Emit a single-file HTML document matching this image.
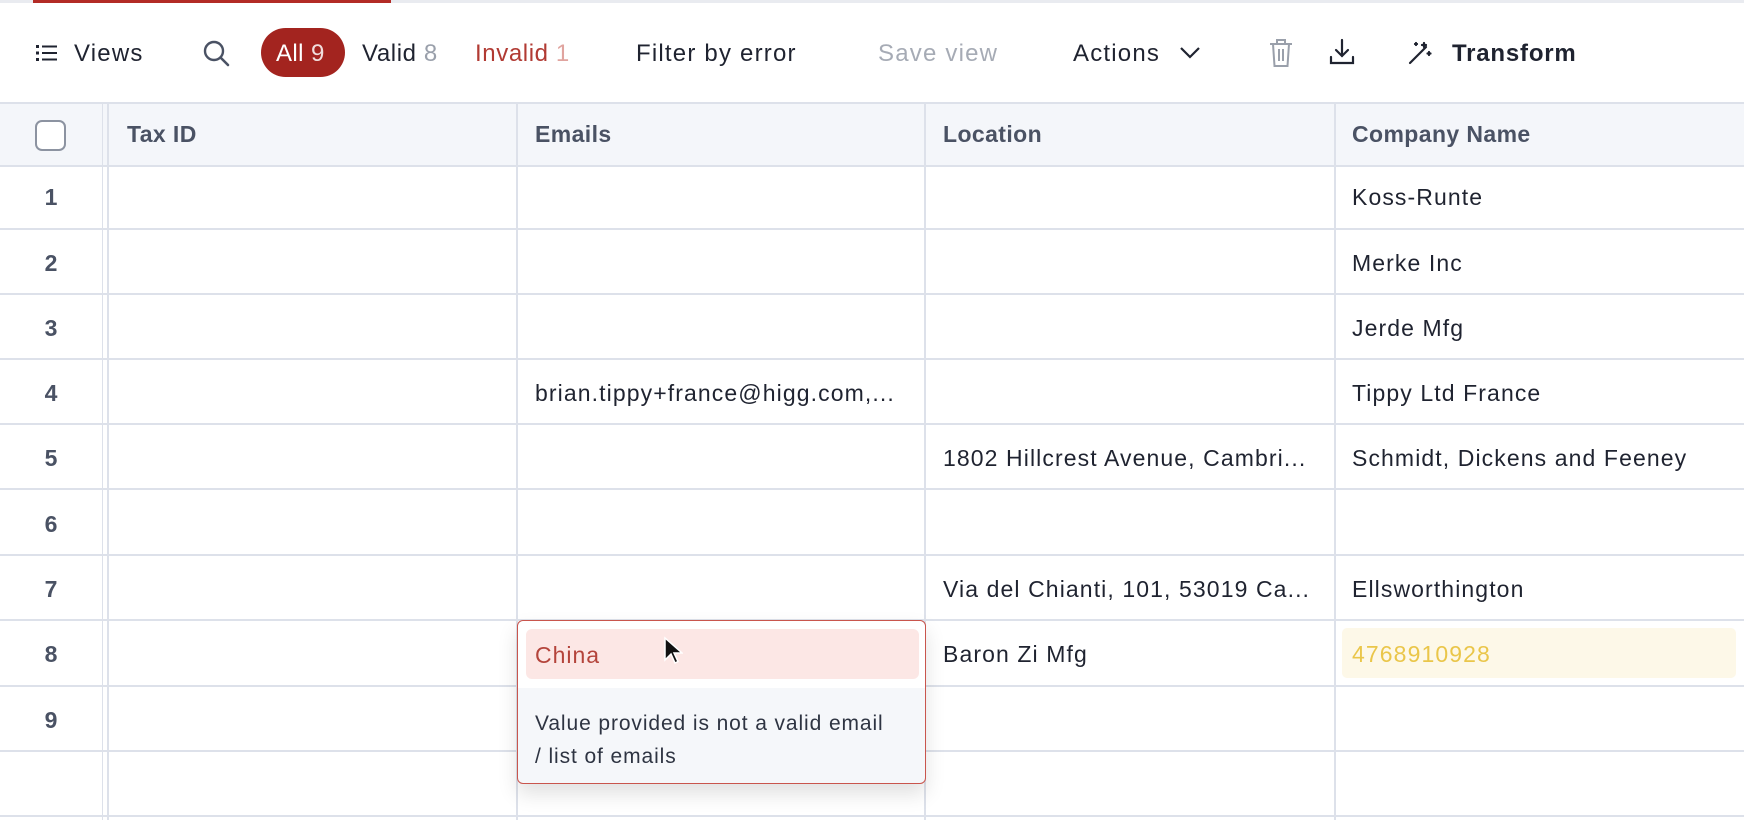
<!DOCTYPE html>
<html><head><meta charset="utf-8"><style>
*{box-sizing:border-box;margin:0;padding:0}
body{width:1744px;height:820px;overflow:hidden;background:#fff;font-family:"Liberation Sans",sans-serif;color:#1f2330;position:relative}
.a{position:absolute;white-space:nowrap}
.tb{font-size:24px;top:40px;letter-spacing:1.2px}
.h{position:absolute;top:102px;height:65px;left:0;width:1744px;background:#f4f6fa;border-top:2px solid #dde1ea;border-bottom:2px solid #dde1ea}
.vl{position:absolute;top:102px;bottom:0;width:2px;background:#dde1ea}
.hl{position:absolute;left:0;width:1744px;height:2px;background:#dde1ea}
.ht{font-size:23px;color:#4a5264;top:121px;font-weight:bold;letter-spacing:0.4px}
.n{font-size:23px;color:#4a5264;width:102px;text-align:center;left:0;font-weight:bold}
.c{font-size:23px;color:#1f2330;letter-spacing:1.1px}
</style></head><body>
<div class="a" style="left:0;top:0;width:1744px;height:3px;background:#e9ebf0"></div>
<div class="a" style="left:33px;top:0;width:358px;height:3px;background:#b32b26"></div>
<svg class="a" style="left:36px;top:44px" width="22" height="18" viewBox="0 0 22 18"><g fill="#1f2330"><rect x="0" y="1" width="3" height="3"/><rect x="0" y="7.5" width="3" height="3"/><rect x="0" y="14" width="3" height="3"/><rect x="6" y="1.5" width="15" height="2"/><rect x="6" y="8" width="15" height="2"/><rect x="6" y="14.5" width="15" height="2"/></g></svg>
<div class="a tb" style="left:74px">Views</div>
<svg class="a" style="left:202px;top:39px" width="30" height="30" viewBox="0 0 30 30"><circle cx="12" cy="12" r="9" fill="none" stroke="#4a5264" stroke-width="2.4"/><path d="M19 19l7 7" stroke="#4a5264" stroke-width="2.6" stroke-linecap="round"/></svg>
<div class="a" style="left:261px;top:28px;width:84px;height:49px;border-radius:25px;background:#a3241f"></div>
<div class="a tb" style="left:276px;color:#fff;letter-spacing:0.4px">All <span style="opacity:.85">9</span></div>
<div class="a tb" style="left:362px;letter-spacing:0.6px">Valid <span style="color:#9aa0ab">8</span></div>
<div class="a tb" style="left:475px;color:#b13a33;letter-spacing:0.6px">Invalid <span style="color:#e0a49f">1</span></div>
<div class="a tb" style="left:636px">Filter by error</div>
<div class="a tb" style="left:878px;color:#a6abb5">Save view</div>
<div class="a tb" style="left:1073px">Actions</div>
<svg class="a" style="left:1179px;top:46px" width="22" height="14" viewBox="0 0 22 14"><path d="M2 2l9 9 9-9" fill="none" stroke="#1f2330" stroke-width="2.2"/></svg>
<svg class="a" style="left:1268px;top:38px" width="26" height="30" viewBox="0 0 26 30"><g fill="none" stroke="#9aa0ab" stroke-width="2"><path d="M2 6h22M9 6V2h8v4M5 6l1.5 22h13L21 6M11 11v12M15 11v12"/></g></svg>
<svg class="a" style="left:1328px;top:38px" width="28" height="28" viewBox="0 0 28 28"><g fill="none" stroke="#1f2330" stroke-width="2.2" stroke-linecap="round"><path d="M14 2v16M8 12l6 6 6-6M3 19v6h22v-6"/></g></svg>
<svg class="a" style="left:1407px;top:40px" width="26" height="26" viewBox="0 0 26 26"><g stroke="#1f2330" stroke-width="2.2" stroke-linecap="round" fill="none"><path d="M3 23L19 7"/><path d="M17 3v4M15 5h4M22 12v3M20.5 13.5h3M9 3v2M8 4h2"/></g></svg>
<div class="a tb" style="left:1452px;font-weight:bold;letter-spacing:0.8px">Transform</div>
<div class="h"></div>
<div class="vl" style="left:102px;width:1px"></div>
<div class="vl" style="left:107px"></div>
<div class="vl" style="left:516px"></div>
<div class="vl" style="left:924px"></div>
<div class="vl" style="left:1334px"></div>
<div class="hl" style="top:228px"></div>
<div class="hl" style="top:293px"></div>
<div class="hl" style="top:358px"></div>
<div class="hl" style="top:423px"></div>
<div class="hl" style="top:488px"></div>
<div class="hl" style="top:554px"></div>
<div class="hl" style="top:619px"></div>
<div class="hl" style="top:685px"></div>
<div class="hl" style="top:750px"></div>
<div class="hl" style="top:815px"></div>
<div class="a" style="left:35px;top:120px;width:31px;height:31px;border:2px solid #8c93a1;border-radius:7px;background:#fff"></div>
<div class="a ht" style="left:127px">Tax ID</div>
<div class="a ht" style="left:535px">Emails</div>
<div class="a ht" style="left:943px">Location</div>
<div class="a ht" style="left:1352px">Company Name</div>
<div class="a n" style="top:184px">1</div>
<div class="a n" style="top:250px">2</div>
<div class="a n" style="top:315px">3</div>
<div class="a n" style="top:380px">4</div>
<div class="a n" style="top:445px">5</div>
<div class="a n" style="top:511px">6</div>
<div class="a n" style="top:576px">7</div>
<div class="a n" style="top:641px">8</div>
<div class="a n" style="top:707px">9</div>
<div class="a c" style="left:1352px;top:184px">Koss-Runte</div>
<div class="a c" style="left:1352px;top:250px">Merke Inc</div>
<div class="a c" style="left:1352px;top:315px">Jerde Mfg</div>
<div class="a c" style="left:535px;top:380px">brian.tippy+france@higg.com,...</div>
<div class="a c" style="left:1352px;top:380px">Tippy Ltd France</div>
<div class="a c" style="left:943px;top:445px">1802 Hillcrest Avenue, Cambri...</div>
<div class="a c" style="left:1352px;top:445px">Schmidt, Dickens and Feeney</div>
<div class="a c" style="left:943px;top:576px">Via del Chianti, 101, 53019 Ca...</div>
<div class="a c" style="left:1352px;top:576px">Ellsworthington</div>
<div class="a c" style="left:943px;top:641px">Baron Zi Mfg</div>
<div class="a" style="left:1342px;top:628px;width:394px;height:50px;background:#fdf8e8;border-radius:5px"></div>
<div class="a c" style="left:1352px;top:641px;color:#eac64a">4768910928</div>
<div class="a" style="left:517px;top:620px;width:409px;height:164px;background:#f5f7fa;border:1.5px solid #c9554d;border-radius:6px;box-shadow:0 10px 20px rgba(0,0,0,.12)">
<div style="position:absolute;left:0;top:0;right:0;height:67px;background:#fff;border-radius:6px 6px 0 0"></div>
<div style="position:absolute;left:8px;top:8px;right:6px;height:50px;background:#fce7e5;border-radius:6px"></div>
<div class="a" style="left:17px;top:21px;font-size:23px;color:#b4443b;letter-spacing:1px">China</div>
<div class="a" style="left:17px;top:86px;font-size:21px;line-height:33px;color:#2e3442;white-space:normal;width:370px;letter-spacing:0.9px">Value provided is not a valid email<br>/ list of emails</div>
</div>
<svg class="a" style="left:663px;top:636px" width="20" height="30" viewBox="0 0 20 30"><path d="M2 2v22l6-6 4 9 3-1.5-4-8.5h8z" fill="#111" stroke="#fff" stroke-width="1.5"/></svg>
</body></html>
